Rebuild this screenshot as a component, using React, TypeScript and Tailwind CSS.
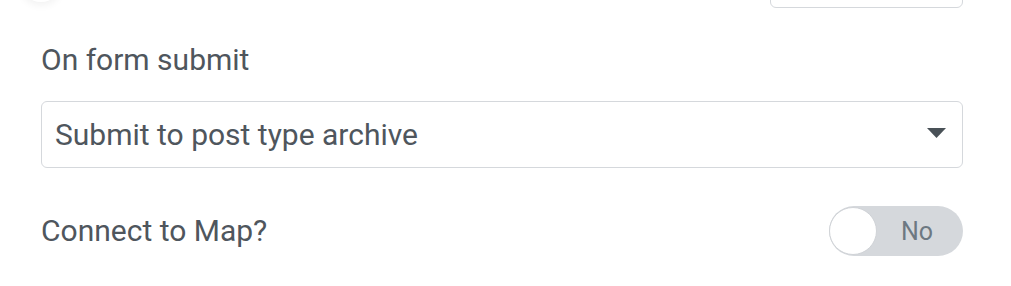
import React, { useState } from 'react';

const FONT = { fontFamily: 'Roboto, "Noto Sans", sans-serif' };

export default function App() {
  const [action, setAction] = useState('archive');
  const [connected, setConnected] = useState(false);

  return (
    <div className="w-[1011px] h-[286px] bg-white overflow-hidden" style={FONT}>
      {/* tail end of the controls above */}
      <div className="flex justify-between h-[8px] pl-[20px] pr-[48px]">
        <div className="w-[42px] h-[42px] -mt-[40px] rounded-full bg-white shadow-[0_3px_8px_rgba(0,0,0,0.06)]" />
        <div className="w-[193px] h-[40px] -mt-[32px] rounded-[6px] border border-[#d5d8dc] bg-white" />
      </div>

      <div className="pl-[41px] pr-[48px]">
        <label className="block mt-[35px] text-[30px] leading-[34px] text-[#4f565d]">On form submit</label>

        <div className="relative mt-[24px]">
          <select
            value={action}
            onChange={(e) => setAction(e.target.value)}
            className="appearance-none w-full h-[67px] pl-[13px] pr-[60px] rounded-[6px] border border-[#d5d8dc] bg-white text-[30px] text-[#4f565d] outline-none"
            style={FONT}
          >
            <option value="archive">Submit to post type archive</option>
            <option value="ajax">Reload listing with AJAX</option>
            <option value="page">Submit to page</option>
          </select>
          <svg
            className="absolute right-[17px] top-[27px] pointer-events-none"
            width="19"
            height="10"
            viewBox="0 0 19 10"
          >
            <polygon points="0,0 19,0 9.5,10" fill="#495157" />
          </svg>
        </div>

        <div className="flex items-center justify-between mt-[38px]">
          <span className="text-[30px] leading-[34px] text-[#4f565d]">Connect to Map?</span>
          <button
            type="button"
            onClick={() => setConnected(!connected)}
            className="relative flex items-center w-[134px] h-[50px] rounded-full bg-[#d5d8dc]"
          >
            <span className="absolute left-0 top-[1px] w-[48px] h-[48px] rounded-full bg-white border border-[#d0d3d7]" />
            <span className="ml-[72px] text-[25px] leading-none text-[#6d7882]">{connected ? 'Yes' : 'No'}</span>
          </button>
        </div>
      </div>
    </div>
  );
}
